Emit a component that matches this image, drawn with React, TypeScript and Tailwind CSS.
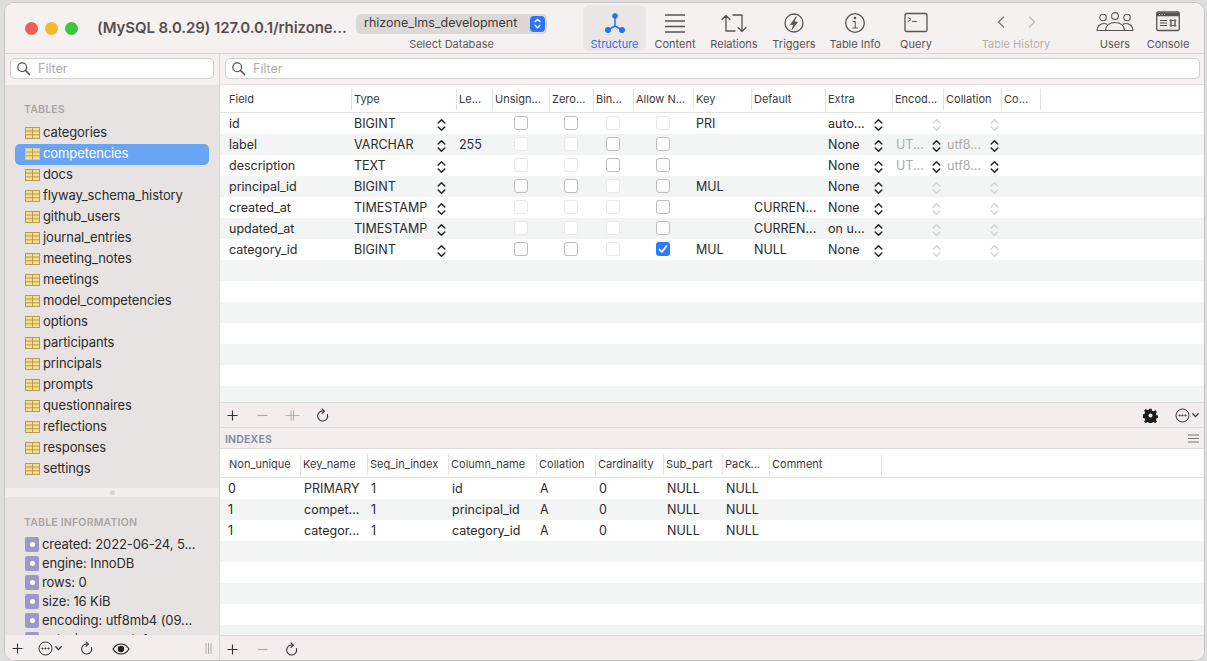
import React from "react";

const tables = ["categories", "competencies", "docs", "flyway_schema_history", "github_users", "journal_entries", "meeting_notes", "meetings", "model_competencies", "options", "participants", "principals", "prompts", "questionnaires", "reflections", "responses", "settings"];
const info = ["created: 2022-06-24, 5...", "engine: InnoDB", "rows: 0", "size: 16 KiB", "encoding: utf8mb4 (09...", "auto_increment: 1"];

// column widths taken from the header dividers
const fieldGrid = "grid grid-cols-[132px_105px_36px_57px_44px_40px_60px_58px_74px_67px_51px_58px_39px_1fr]";
const indexGrid = "grid grid-cols-[81px_67px_81px_88px_59px_68px_59px_47px_112px_1fr]";

type Box = "on" | "off" | "checked";

const fields: { name: string; type: string; len?: string; boxes: Box[]; key?: string; def?: string; extra: string; enc?: string; coll?: string }[] = [
  { name: "id", type: "BIGINT", boxes: ["on", "on", "off", "off"], key: "PRI", extra: "auto..." },
  { name: "label", type: "VARCHAR", len: "255", boxes: ["off", "off", "on", "on"], extra: "None", enc: "UT...", coll: "utf8..." },
  { name: "description", type: "TEXT", boxes: ["off", "off", "on", "on"], extra: "None", enc: "UT...", coll: "utf8..." },
  { name: "principal_id", type: "BIGINT", boxes: ["on", "on", "off", "on"], key: "MUL", extra: "None" },
  { name: "created_at", type: "TIMESTAMP", boxes: ["off", "off", "off", "on"], def: "CURREN...", extra: "None" },
  { name: "updated_at", type: "TIMESTAMP", boxes: ["off", "off", "off", "on"], def: "CURREN...", extra: "on u..." },
  { name: "category_id", type: "BIGINT", boxes: ["on", "on", "off", "checked"], key: "MUL", def: "NULL", extra: "None" },
];

const indexes = [
  ["0", "PRIMARY", "1", "id", "A", "0", "NULL", "NULL"],
  ["1", "compet...", "1", "principal_id", "A", "0", "NULL", "NULL"],
  ["1", "categor...", "1", "category_id", "A", "0", "NULL", "NULL"],
];

const Search = () => (
  <svg width="15" height="15" viewBox="0 0 15 15" fill="none" stroke="#555" strokeWidth="1.3" className="shrink-0">
    <circle cx="6.2" cy="6.2" r="4.4" />
    <path d="M9.5 9.5l4 4" strokeWidth="1.7" strokeLinecap="round" />
  </svg>
);

const Stepper = ({ dim }: { dim?: boolean }) => (
  <svg width="9" height="14" viewBox="0 0 9 14" fill="none" stroke={dim ? "#d4d4d4" : "#2a2a2a"} strokeWidth="1.6" strokeLinecap="round" strokeLinejoin="round" className="shrink-0">
    <path d="M1.2 5L4.5 1.8 7.8 5M1.2 9l3.3 3.2L7.8 9" />
  </svg>
);

const Check = ({ state }: { state: Box }) => {
  if (state === "checked")
    return (
      <div className="w-[14px] h-[14px] rounded-[3px] bg-[#2f7bf6] flex items-center justify-center">
        <svg width="10" height="10" viewBox="0 0 10 10" fill="none" stroke="#fff" strokeWidth="1.8" strokeLinecap="round" strokeLinejoin="round">
          <path d="M1.5 5.5l2.4 2.5 4.6-6" />
        </svg>
      </div>
    );
  return <div className={`w-[14px] h-[14px] rounded-[3px] border bg-white ${state === "on" ? "border-[#bdbdbd]" : "border-[#e9e9e9]"}`} />;
};

const TableIcon = ({ active }: { active?: boolean }) => (
  <svg width="15" height="12" viewBox="0 0 15 12" className="shrink-0">
    <rect x="0.5" y="0.5" width="14" height="11" fill="#f3dd94" stroke={active ? "#d9c88a" : "#b99b4b"} />
    <path d="M0.5 4h14M0.5 7.800h14M7.500 0.500v11" stroke="#b99b4b" />
  </svg>
);

const InfoIcon = () => (
  <div className="w-[14px] h-[15px] shrink-0 rounded-[2px] bg-[#9c98c9] flex items-center justify-center">
    <div className="w-[5px] h-[5px] rounded-full bg-white" />
  </div>
);

const Plus = ({ dim }: { dim?: boolean }) => (
  <svg width="11" height="11" viewBox="0 0 11 11" stroke={dim ? "#b5b5b5" : "#333"} strokeWidth="1.1">
    <path d="M5.5 0.5v10M0.5 5.5h10" />
  </svg>
);

const Minus = () => (
  <svg width="11" height="11" viewBox="0 0 11 11" stroke="#a8a8a8" strokeWidth="1.1">
    <path d="M0.5 5.5h10" />
  </svg>
);

const Duplicate = () => (
  <svg width="15" height="11" viewBox="0 0 15 11" stroke="#b2b2b2" strokeWidth="1.1">
    <path d="M8.5 0.5v10M3.5 5.5h11M6 0.5v10M0.5 5.5h4" />
  </svg>
);

const Reload = () => (
  <svg width="13" height="15" viewBox="0 0 13 15" fill="none" stroke="#333" strokeWidth="1.1" strokeLinecap="round" strokeLinejoin="round">
    <path d="M8 3.2A5 5 0 1 0 11.4 6.5" />
    <path d="M6 0.8L8.4 3.2 6 5.4" />
  </svg>
);

const Dots = () => (
  <span className="flex items-center gap-[2px]">
    <svg width="15" height="15" viewBox="0 0 15 15" fill="none" stroke="#333" strokeWidth="1">
      <circle cx="7.5" cy="7.5" r="6.5" />
      <circle cx="4.5" cy="7.5" r="0.6" fill="#333" />
      <circle cx="7.5" cy="7.5" r="0.6" fill="#333" />
      <circle cx="10.5" cy="7.5" r="0.6" fill="#333" />
    </svg>
    <svg width="7" height="5" viewBox="0 0 7 5" fill="none" stroke="#333" strokeWidth="1.3" strokeLinecap="round">
      <path d="M0.8 0.8L3.5 3.6 6.2 0.8" />
    </svg>
  </span>
);

const Gear = () => (
  <svg width="15" height="15" viewBox="0 0 15 15">
    <path d="M6.300 0.500h2.400l.4 2 1.700.7 1.700-1.100 1.700 1.700-1.100 1.700.7 1.700 2 .4v2.400l-2 .4-.7 1.700 1.100 1.700-1.700 1.700-1.700-1.100-1.700.7-.4 2H6.300l-.4-2-1.700-.7-1.700 1.100-1.700-1.700 1.100-1.700-.7-1.700-2-.4V6.300l2-.4.700-1.700-1.100-1.700 1.700-1.700 1.700 1.100 1.700-.7z" fill="#1c1c1c" transform="translate(0.300 0.300) scale(0.960)" />
    <circle cx="7.500" cy="7.500" r="2" fill="#f3eded" />
  </svg>
);

const ic = { fill: "none", stroke: "#555", strokeWidth: 1.3, strokeLinecap: "round" as const, strokeLinejoin: "round" as const };

const toolbar = [
  {
    label: "Structure", w: "w-[63px]", active: true,
    icon: (
      <svg width="22" height="24" viewBox="0 0 22 24" fill="#2f6ff0" stroke="#2f6ff0">
        <path d="M11 6v10M11 16L4 20M11 16l7 4" strokeWidth="1.500" />
        <circle cx="11" cy="6" r="2.400" />
        <circle cx="4" cy="20" r="2.600" />
        <circle cx="18" cy="20" r="2.600" />
      </svg>
    ),
  },
  {
    label: "Content", w: "w-[58px]",
    icon: (
      <svg width="22" height="24" viewBox="0 0 22 24" {...ic}>
        <path d="M1 5h20M1 11h20M1 16.500h20M1 22h20" strokeLinecap="butt" />
      </svg>
    ),
  },
  {
    label: "Relations", w: "w-[60px]",
    icon: (
      <svg width="26" height="24" viewBox="0 0 26 24" {...ic}>
        <path d="M1 9.500l4-4 4 4M5 5.500V21h9M17 17.500l4 4 4-4M21 21.500V5H12" />
      </svg>
    ),
  },
  {
    label: "Triggers", w: "w-[60px]",
    icon: (
      <svg width="24" height="24" viewBox="0 0 24 24" {...ic}>
        <circle cx="12" cy="13" r="9" />
        <path d="M14 7L8.500 14.500h3.200L10 19.500l5.500-7.500h-3.200z" fill="#555" strokeWidth="0.800" />
      </svg>
    ),
  },
  {
    label: "Table Info", w: "w-[62px]",
    icon: (
      <svg width="24" height="24" viewBox="0 0 24 24" {...ic}>
        <circle cx="12" cy="13" r="9.300" />
        <path d="M10 11.500h2.200V18M9.800 18h4.600" strokeWidth="1.100" />
        <circle cx="12" cy="8" r="0.700" fill="#555" />
      </svg>
    ),
  },
  {
    label: "Query", w: "w-[60px]",
    icon: (
      <svg width="24" height="24" viewBox="0 0 24 24" {...ic}>
        <rect x="1" y="3.500" width="22" height="18" rx="1.500" />
        <path d="M4 7.500l3 2-3 2M8.500 11.500h4" strokeWidth="1" />
      </svg>
    ),
  },
];

const H = ({ children, first }: { children?: React.ReactNode; first?: boolean }) => (
  <div className={`h-[21px] flex items-center border-r border-[#e2e2e2] truncate ${first ? "pl-[9px]" : "pl-[2px]"}`}>{children}</div>
);

const fieldHeads = ["Type", "Le...", "Unsign...", "Zero...", "Bin...", "Allow N...", "Key", "Default", "Extra", "Encod...", "Collation", "Co..."];
const indexHeads = ["Key_name", "Seq_in_index", "Column_name", "Collation", "Cardinality", "Sub_part", "Pack...", "Comment"];

export default function App() {
  return (
    <div className="w-[1207px] h-[661px] overflow-hidden bg-[#dedede] pl-[4px] pr-[2px] pt-[2px] font-['Inter',sans-serif] text-[#2b2b2b]">
      <div className="w-full h-full flex flex-col rounded-[10px] overflow-hidden border border-[#c8c4c4] bg-white">
        {/* title bar */}
        <div className="h-[51px] shrink-0 flex items-center bg-[#f6f1f1] border-b border-[#d8d4d4]">
          <div className="flex gap-[7px] ml-[20px] w-[72px] shrink-0">
            <div className="w-[13px] h-[13px] shrink-0 rounded-full bg-[#ee5f57]" />
            <div className="w-[13px] h-[13px] shrink-0 rounded-full bg-[#f6b92b]" />
            <div className="w-[13px] h-[13px] shrink-0 rounded-full bg-[#3fc73c]" />
          </div>
          <div className="text-[15px] leading-none font-semibold text-[#55504f] w-[259px] shrink-0 whitespace-nowrap tracking-[-0.1px] -mt-[2px]">(MySQL 8.0.29) 127.0.0.1/rhizone...</div>
          <div className="w-[191px] shrink-0 flex flex-col items-center pt-[7px]">
            <div className="w-full h-[20px] rounded-[5px] bg-[#dcd8d8] flex items-center justify-between pl-[8px] pr-[2px] text-[12.5px] text-[#3c3c3c]">
              <span>rhizone_lms_development</span>
              <div className="w-[15px] h-[16px] rounded-[4px] bg-[#2f74f0] flex items-center justify-center">
                <svg width="7" height="11" viewBox="0 0 7 11" fill="none" stroke="#fff" strokeWidth="1.300" strokeLinecap="round" strokeLinejoin="round">
                  <path d="M1 3.800L3.500 1.300 6 3.800M1 7.200l2.500 2.500L6 7.200" />
                </svg>
              </div>
            </div>
            <div className="text-[11px] leading-none mt-[5px] text-[#5a5a5a]">Select Database</div>
          </div>
          <div className="flex ml-[36px] shrink-0">
            {toolbar.map((t) => (
              <div key={t.label} className={`${t.w} h-[46px] flex flex-col items-center justify-end pb-[1px] rounded-[6px] ${t.active ? "bg-[#eae6e6] text-[#2f6ff0]" : "text-[#555]"}`}>
                {t.icon}
                <span className="text-[11px] leading-none mt-[5px] whitespace-nowrap">{t.label}</span>
              </div>
            ))}
          </div>
          <div className="w-[88px] ml-[26px] shrink-0 h-[46px] flex flex-col items-center justify-end pb-[1px] text-[#b3b0b0]">
            <div className="h-[24px] flex items-center gap-[23px]">
              <svg width="8" height="12" viewBox="0 0 8 12" fill="none" stroke="#777" strokeWidth="1.300" strokeLinecap="round" strokeLinejoin="round">
                <path d="M6.500 1L1.500 6l5 5" />
              </svg>
              <svg width="8" height="12" viewBox="0 0 8 12" fill="none" stroke="#bdbdbd" strokeWidth="1.300" strokeLinecap="round" strokeLinejoin="round">
                <path d="M1.500 1l5 5-5 5" />
              </svg>
            </div>
            <span className="text-[11px] leading-none mt-[5px] whitespace-nowrap">Table History</span>
          </div>
          <div className="w-[48px] ml-[31px] shrink-0 h-[46px] flex flex-col items-center justify-end pb-[1px] text-[#555]">
            <svg width="38" height="22" viewBox="0 0 38 22" {...ic} strokeWidth={1.100}>
              <circle cx="7" cy="7.500" r="3.200" />
              <circle cx="19" cy="6" r="3.400" />
              <circle cx="31" cy="7.500" r="3.200" />
              <path d="M9.500 20.500H1c0-4 3-7 7-7 1 0 2 .2 3 .7M28.500 20.500H37c0-4-3-7-7-7-1 0-2 .2-3 .7" />
              <path d="M9.500 20.500c0-5 4-8 9.500-8s9.500 3 9.500 8z" />
            </svg>
            <span className="text-[11px] leading-none mt-[7px]">Users</span>
          </div>
          <div className="w-[50px] ml-[4px] shrink-0 h-[46px] flex flex-col items-center justify-end pb-[1px] text-[#555]">
            <svg width="24" height="22" viewBox="0 0 24 22" {...ic}>
              <rect x="0.700" y="2" width="22.600" height="18.500" rx="1.500" fill="#f0ecec" />
              <path d="M1 4.500h22" strokeWidth="3.600" strokeLinecap="butt" />
              <path d="M3 4.500h1M5.500 4.500h1M8 4.500h1" stroke="#ddd" strokeWidth="1" strokeLinecap="butt" />
              <path d="M4 10.500h7M4 13h7M4 15.500h7" strokeWidth="1" strokeLinecap="butt" />
              <path d="M15 10.500h4v5h-4zM15 10.500h-1.500v-.1M19 15.500h1.300M15 15.500h-1.500M19 10.500h1.300M15 9v8M19 9v8" strokeWidth="0.900" strokeLinecap="butt" />
            </svg>
            <span className="text-[11px] leading-none mt-[7px]">Console</span>
          </div>
        </div>

        <div className="flex-1 min-h-0 flex">
          {/* sidebar */}
          <aside className="w-[215px] shrink-0 flex flex-col bg-[#e8e3e3] border-r border-[#d9d5d5]">
            <div className="h-[31px] shrink-0 bg-[#f6f1f1] pt-[4px] px-[5px]">
              <div className="w-full h-[21px] bg-white rounded-[5px] border border-[#d2cfcf] flex items-center gap-[7px] pl-[5px] text-[12.5px] text-[#aeaeae]">
                <Search />
                <span className="pt-[2px]">Filter</span>
              </div>
            </div>
            <div className="text-[10.5px] leading-none font-semibold text-[#a9a5a5] ml-[19px] mt-[20px] mb-[7px] tracking-[0.2px]">TABLES</div>
            <div className="px-[10px]">
              {tables.map((t) => (
                <div key={t} className={`h-[21px] flex items-center gap-[3px] pl-[10px] text-[13px] rounded-[5px] ${t === "competencies" ? "bg-[#6aa5f5] text-white" : ""}`}>
                  <TableIcon active={t === "competencies"} />
                  <span className="whitespace-nowrap tracking-[-0.1px]">{t}</span>
                </div>
              ))}
            </div>
            <div className="h-[9px] shrink-0 mt-[8px] bg-[#f3eeee] flex items-center justify-center">
              <div className="w-[5px] h-[5px] rounded-full bg-[#d6d2d2]" />
            </div>
            <div className="text-[10.5px] leading-none font-semibold text-[#a9a5a5] ml-[19px] mt-[21px] mb-[7px] tracking-[0.2px]">TABLE INFORMATION</div>
            <div className="flex-1 min-h-0 overflow-hidden pl-[20px]">
              {info.map((t) => (
                <div key={t} className="h-[19px] flex items-center gap-[3px] text-[13px]">
                  <InfoIcon />
                  <span className="whitespace-nowrap tracking-[-0.1px]">{t}</span>
                </div>
              ))}
            </div>
            <div className="h-[25px] shrink-0 bg-[#f3eded] flex items-center pl-[7px] pr-[7px] pt-[2px]">
              <Plus />
              <div className="ml-[15px]"><Dots /></div>
              <div className="ml-[18px]"><Reload /></div>
              <svg width="18" height="12" viewBox="0 0 18 12" className="ml-[19px]" fill="none" stroke="#222" strokeWidth="1.100">
                <path d="M1 6c2-3.300 5-5 8-5s6 1.700 8 5c-2 3.300-5 5-8 5s-6-1.700-8-5z" />
                <circle cx="9" cy="6" r="2.600" fill="#222" />
              </svg>
              <svg width="7" height="11" viewBox="0 0 7 11" className="ml-auto" stroke="#aaa">
                <path d="M1 0v11M3.500 0v11M6 0v11" />
              </svg>
            </div>
          </aside>

          {/* main */}
          <main className="flex-1 min-w-0 flex flex-col">
            <div className="h-[31px] shrink-0 bg-[#f6f1f1] pt-[4px] pl-[5px] pr-[4px] border-b border-[#e2dede]">
              <div className="w-full h-[21px] bg-white rounded-[5px] border border-[#d2cfcf] flex items-center gap-[7px] pl-[5px] text-[12.5px] text-[#aeaeae]">
                <Search />
                <span className="pt-[2px]">Filter</span>
              </div>
            </div>

            {/* fields table */}
            <div className="h-[317px] shrink-0 overflow-hidden">
              <div className={`${fieldGrid} h-[28px] pt-[4px] border-b border-[#e2e2e2] text-[11px] text-[#3a3a3a] whitespace-nowrap`}>
                <H first>Field</H>
                {fieldHeads.map((h) => (
                  <H key={h}>{h}</H>
                ))}
              </div>
              {fields.map((f, i) => (
                <div key={f.name} className={`${fieldGrid} h-[21px] pt-[2px] items-center text-[12.5px] whitespace-nowrap ${i % 2 ? "bg-[#f3f4f4]" : ""}`}>
                  <div className="pl-[9px]">{f.name}</div>
                  <div className="pl-[2px] pr-[11px] flex items-center justify-between">
                    <span>{f.type}</span>
                    <Stepper />
                  </div>
                  <div className="pl-[2px]">{f.len}</div>
                  {f.boxes.map((b, j) => (
                    <div key={j} className="flex justify-center pr-[2px] pb-[3px]">
                      <Check state={b} />
                    </div>
                  ))}
                  <div className="pl-[2px]">{f.key}</div>
                  <div className="pl-[2px]">{f.def}</div>
                  <div className="pl-[2px] pr-[10px] flex items-center justify-between">
                    <span>{f.extra}</span>
                    <Stepper />
                  </div>
                  <div className="pl-[3px] pr-[3px] flex items-center justify-between text-[#adadad]">
                    <span>{f.enc}</span>
                    <Stepper dim={!f.enc} />
                  </div>
                  <div className="pl-[3px] pr-[3px] flex items-center justify-between text-[#adadad]">
                    <span>{f.coll}</span>
                    <Stepper dim={!f.coll} />
                  </div>
                </div>
              ))}
              {Array.from({ length: 7 }).map((_, i) => (
                <div key={i} className={`h-[21px] ${i % 2 ? "" : "bg-[#f3f4f4]"}`} />
              ))}
            </div>

            <div className="h-[26px] shrink-0 bg-[#f3eded] border-y border-[#dedada] flex items-center pl-[7px] pr-[5px]">
              <Plus />
              <div className="ml-[19px]"><Minus /></div>
              <div className="ml-[17px]"><Duplicate /></div>
              <div className="ml-[16px]"><Reload /></div>
              <div className="ml-auto"><Gear /></div>
              <div className="ml-[17px]"><Dots /></div>
            </div>

            <div className="h-[21px] shrink-0 bg-[#f3eded] border-b border-[#dedada] flex items-center justify-between pl-[5px] pr-[5px]">
              <span className="text-[10.5px] pt-[3px] font-semibold text-[#7d8aa3] tracking-[0.2px]">INDEXES</span>
              <svg width="11" height="9" viewBox="0 0 11 9" stroke="#777">
                <path d="M0 1h11M0 4.500h11M0 8h11" />
              </svg>
            </div>

            {/* indexes table */}
            <div className="flex-1 min-h-0 overflow-hidden">
              <div className={`${indexGrid} h-[29px] pt-[5px] border-b border-[#e2e2e2] text-[11px] text-[#3a3a3a] whitespace-nowrap`}>
                <H first>Non_unique</H>
                {indexHeads.map((h) => (
                  <H key={h}>{h}</H>
                ))}
              </div>
              {indexes.map((r, i) => (
                <div key={i} className={`${indexGrid} h-[21px] pt-[2px] items-center text-[12.5px] whitespace-nowrap ${i % 2 ? "bg-[#f3f4f4]" : ""}`}>
                  {r.map((c, j) => (
                    <div key={j} className={j === 0 ? "pl-[8px]" : "pl-[3px]"}>{c}</div>
                  ))}
                </div>
              ))}
              {Array.from({ length: 5 }).map((_, i) => (
                <div key={i} className={`h-[21px] ${i % 2 ? "" : "bg-[#f3f4f4]"}`} />
              ))}
            </div>

            <div className="h-[25px] shrink-0 bg-[#f3eded] border-t border-[#dedada] flex items-center pl-[7px] pt-[2px]">
              <Plus />
              <div className="ml-[19px]"><Minus /></div>
              <div className="ml-[17px]"><Reload /></div>
            </div>
          </main>
        </div>
      </div>
    </div>
  );
}
